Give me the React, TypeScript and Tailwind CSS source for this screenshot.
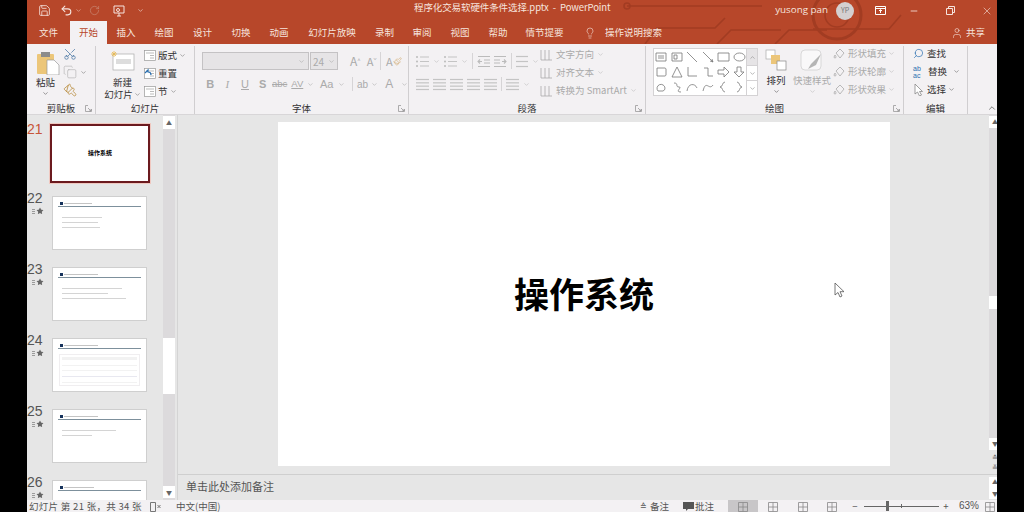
import type { ReactNode } from 'react';
import { ChevronDown, ChevronUp, Copy, Lightbulb, Minus, Paintbrush, Scissors, Search, Undo2, User, X, Save, RotateCw, Star } from 'lucide-react';

const FONT = "font-['Noto_Sans_CJK_SC','Liberation_Sans',sans-serif]";

const tabs = [
  { label: '文件', w: 'w-[43px]' },
  { label: '开始', w: 'w-[37px]', active: true },
  { label: '插入', w: 'w-[38px]' },
  { label: '绘图', w: 'w-[38px]' },
  { label: '设计', w: 'w-[39px]' },
  { label: '切换', w: 'w-[38px]' },
  { label: '动画', w: 'w-[38px]' },
  { label: '幻灯片放映', w: 'w-[68px]' },
  { label: '录制', w: 'w-[37px]' },
  { label: '审阅', w: 'w-[38px]' },
  { label: '视图', w: 'w-[38px]' },
  { label: '帮助', w: 'w-[38px]' },
  { label: '情节提要', w: 'w-[55px]' },
];

function Caret({ className = 'text-[#777]' }: { className?: string }) {
  return <ChevronDown size={7} strokeWidth={2} className={className} />;
}

function Group({ label, width, launcher, children }: { label: string; width: string; launcher?: boolean; children: ReactNode }) {
  return (
    <div className={`${width} shrink-0 h-full flex flex-col border-r border-[#d0ced0]`}>
      <div className="flex-1 flex min-h-0">{children}</div>
      <div className="h-[12px] relative flex items-center justify-center text-[9.5px] text-[#333]">
        {label}
        {launcher && (
          <svg viewBox="0 0 7 7" className="absolute right-[3px] top-[3px] w-[7px] h-[7px]" fill="none" stroke="#999" strokeWidth="0.8">
            <path d="M3 .5H.5v6h6V4M3 3l3 3M6 4v2H4" />
          </svg>
        )}
      </div>
    </div>
  );
}

function Lines({ rows = 3, w = 13, color = '#c4c4c4' }: { rows?: number; w?: number; color?: string }) {
  return (
    <svg width={w} height={13} viewBox={`0 0 ${w} 13`} stroke={color} strokeWidth="1.2">
      {Array.from({ length: rows }).map((_, i) => (
        <line key={i} x1="0" x2={w} y1={1.5 + i * (10 / (rows - 1))} y2={1.5 + i * (10 / (rows - 1))} />
      ))}
    </svg>
  );
}

function BulletList() {
  return (
    <svg width="13" height="13" viewBox="0 0 13 13" stroke="#c4c4c4" strokeWidth="1.2" fill="#bbb">
      <path d="M4 2h9M4 6.500h9M4 11h9" />
      <circle cx="1" cy="2" r="1" stroke="none" />
      <circle cx="1" cy="6.500" r="1" stroke="none" />
      <circle cx="1" cy="11" r="1" stroke="none" />
    </svg>
  );
}

function IndentIcon({ flip }: { flip?: boolean }) {
  return (
    <svg width="13" height="13" viewBox="0 0 13 13" stroke="#bbb" strokeWidth="1.1" fill="none" className={flip ? '-scale-x-100' : ''}>
      <path d="M1 1.500h12M7 5h6M7 8h6M1 11.500h12M5 6.500H1M3 4.500l-2 2 2 2" />
    </svg>
  );
}

function Clipboard() {
  return (
    <div className="flex pt-[5px] pl-[7px]">
      <div className="w-[28px] flex flex-col items-center">
        <svg width="24" height="24" viewBox="0 0 24 24">
          <rect x="1" y="3" width="17" height="20" fill="#ecc679" rx="1" />
          <rect x="5" y="1" width="9" height="5" fill="#8c8c8c" />
          <path d="M11 9h7l5 5v10H11z" fill="#fff" stroke="#9a9a9a" strokeWidth="0.7" />
        </svg>
        <span className="text-[9.5px] leading-[13px] mt-[1px] mr-[5px] text-[#333]">粘贴</span>
        <Caret className="text-[#555] mt-[1px] mr-[5px]" />
      </div>
      <div className="flex flex-col gap-[4px] ml-[1px] -mt-[4px]">
        <Scissors size={14} strokeWidth={1.2} className="text-[#3d6f9e] -rotate-90" />
        <div className="flex items-center gap-[3px]">
          <Copy size={14} strokeWidth={1} className="text-[#aaa]" />
          <Caret />
        </div>
        <Paintbrush size={14} strokeWidth={1.4} className="text-[#b98d3f] rotate-90" />
      </div>
    </div>
  );
}

function SlidesGroup() {
  return (
    <div className="flex pt-[5px] pl-[8px]">
      <div className="w-[37px] flex flex-col items-center">
        <svg width="25" height="20" viewBox="0 0 25 20">
          <rect x="3" y="3" width="21" height="16" fill="#fff" stroke="#aaa" strokeWidth="0.7" />
          <rect x="6" y="8" width="15" height="5" fill="#ddd" />
          <path d="M4 0v6M1 3h6M2 1l4 4M6 1L2 5" stroke="#e8b94f" strokeWidth="0.8" />
        </svg>
        <span className="text-[9.5px] leading-[12px] mt-[5px] text-[#333]">新建</span>
        <span className="flex items-center gap-[1px] text-[9.5px] leading-[12px] text-[#333] whitespace-nowrap">幻灯片<Caret /></span>
      </div>
      <div className="flex flex-col gap-[5px] -mt-[2px] text-[9.5px] text-[#333] ml-[3px] leading-[13px]">
        <div className="flex items-center gap-[2px]"><RibbonBox /><span>版式</span><Caret /></div>
        <div className="flex items-center gap-[2px]"><RibbonBox blue /><span>重置</span></div>
        <div className="flex items-center gap-[2px]"><RibbonBox /><span>节</span><Caret /></div>
      </div>
    </div>
  );
}

function RibbonBox({ blue }: { blue?: boolean }) {
  return (
    <svg width="12" height="11" viewBox="0 0 12 11" fill="none">
      <rect x=".5" y=".5" width="11" height="10" fill="#fff" stroke="#999" strokeWidth="0.7" />
      <path d="M2 3h8M6 5.500h4M6 8h4" stroke="#bbb" />
      {blue && <path d="M1 5l3-3v2c2 0 3 1 3 3" stroke="#2a6fb0" strokeWidth="1.2" />}
    </svg>
  );
}

function FontGroup() {
  const dim = 'text-[#aaa]';
  return (
    <div className="flex flex-col pt-[6px] pl-[7px] w-full">
      <div className="flex items-center h-[18px]">
        <div className="w-[107px] h-[18px] bg-[#e6e4e6] border border-[#c4c2c4] flex items-center justify-end pr-[3px]"><Caret className="text-[#aaa]" /></div>
        <div className="w-[28px] h-[18px] bg-[#e6e4e6] border border-[#c4c2c4] ml-[1px] flex items-center justify-between pl-[2px] pr-[2px] text-[10px] text-[#aaa]">24<Caret className="text-[#aaa]" /></div>
        <span className={`ml-[12px] text-[12px] ${dim}`}>A<sup className="text-[6px]">^</sup></span>
        <span className={`ml-[6px] text-[11px] ${dim}`}>A<sup className="text-[6px]">ˇ</sup></span>
        <div className="ml-[3px] w-[1px] h-[18px] bg-[#d6d4d6]" />
        <span className={`ml-[5px] text-[11px] ${dim}`}>A</span>
        <Paintbrush size={9} className="text-[#d8b98c]" />
      </div>
      <div className="flex items-center h-[14px] mt-[7px] text-[11px] text-[#aaa] font-['Liberation_Sans',sans-serif]">
        <b className="w-[17px] text-center">B</b>
        <i className="w-[18px] text-center font-['Liberation_Serif',serif]">I</i>
        <u className="w-[18px] text-center">U</u>
        <b className="w-[18px] text-center">S</b>
        <s className="w-[17px] text-center text-[9.5px]">abc</s>
        <span className="w-[19px] text-center text-[9.5px] underline">AV</span>
        <Caret className="text-[#aaa]" />
        <span className="w-[23px] text-center ml-[2px]">Aa</span>
        <Caret className="text-[#aaa]" />
        <div className="ml-[7px] w-[1px] h-[14px] bg-[#d6d4d6]" />
        <span className="ml-[1px] w-[18px] text-center text-[10px]">ab</span>
        <Caret className="text-[#aaa]" />
        <span className="ml-[7px] text-[12px]">A</span>
        <Caret className="text-[#aaa] ml-[8px]" />
      </div>
    </div>
  );
}

function ParagraphGroup() {
  return (
    <div className="flex pt-[6px] pl-[7px]">
      <div className="w-[125px] flex flex-col">
        <div className="flex items-center h-[18px] gap-[4px]">
          <BulletList /><Caret className="text-[#bbb]" />
          <BulletList /><Caret className="text-[#bbb]" />
          <div className="w-[1px] h-[16px] bg-[#d6d4d6]" />
          <IndentIcon />
          <IndentIcon flip />
          <div className="w-[1px] h-[16px] bg-[#d6d4d6]" />
          <Lines w={12} /><Caret className="text-[#bbb]" />
        </div>
        <div className="flex items-center h-[14px] mt-[7px] gap-[4px]">
          <Lines rows={4} /><Lines rows={4} /><Lines rows={4} /><Lines rows={4} /><Lines rows={4} />
          <div className="w-[1px] h-[14px] bg-[#d6d4d6]" />
          <Lines rows={4} /><Caret className="text-[#bbb]" />
        </div>
      </div>
      <div className="flex flex-col -mt-[4px] gap-[5px] text-[9.5px] leading-[13px] text-[#aaa] ml-[-1px] whitespace-nowrap">
        {['文字方向', '对齐文本', '转换为 SmartArt'].map(t => (
          <div key={t} className="flex items-center gap-[3px]">
            <svg width="13" height="12" viewBox="0 0 13 12" fill="none" stroke="#aaa" strokeWidth="0.8"><path d="M1 1v10M5 1v10M9 1v10M1 11h11" /></svg>
            <span>{t}</span>
            <Caret className="text-[#bbb]" />
          </div>
        ))}
      </div>
    </div>
  );
}

const shapes = [
  ['M1 2h10v8H1zM3 5h6M3 7h6', 'M1 2h10v8H1zM3 4h3v4H3z', 'M1 1l10 10', 'M1 1l10 10M11 11l-3-1M11 11l-1-3', 'M1 2h11v8H1z', 'M1 6a5.500 4 0 1 0 11 0a5.500 4 0 1 0-11 0'],
  ['M2 2h8a1.500 1.500 0 0 1 1 1v6a1.500 1.500 0 0 1-1 1H2z', 'M6 1l5 10H1z', 'M2 1v9h9', 'M2 2h4v8h5', 'M1 4h6V1l5 5-5 5V8H1z', 'M4 1h4v5h3l-5 5-5-5h3z'],
  ['M3 10a4 4 0 1 1 7-3 3 3 0 0 1-2 3z', 'M3 2c5 0 1 4 5 4s-5 5 2 5', 'M1 10c1-8 8-8 10-3', 'M1 10c3-12 6 0 10-6', 'M8 1C5 1 6 6 3 6c3 0 2 5 5 5', 'M4 1c3 0 2 5 5 5-3 0-2 5-5 5'],
];

function DrawingGroup() {
  return (
    <div className="flex pt-[2px] pl-[7px]">
      <div className="w-[105px] h-[48px] border border-[#d4d2d4] bg-white flex">
        <div className="flex-1 flex flex-col justify-around pl-[1px]">
          {shapes.map((row, i) => (
            <div key={i} className="flex gap-[2.5px]">
              {row.map((d, j) => (
                <svg key={j} width="13" height="12" viewBox="0 0 13 12" fill="none" stroke="#777" strokeWidth="0.8"><path d={d} /></svg>
              ))}
            </div>
          ))}
        </div>
        <div className="w-[11px] border-l border-[#d4d2d4] flex flex-col text-[#888]">
          <div className="h-[16px] bg-[#e6e4e6] flex items-center justify-center"><ChevronUp size={7} /></div>
          <div className="h-[16px] border-y border-[#d4d2d4] flex items-center justify-center"><ChevronDown size={7} /></div>
          <div className="h-[14px] flex items-center justify-center"><ChevronDown size={7} /></div>
        </div>
      </div>
      <div className="w-[36px] flex flex-col items-center pt-[1px]">
        <svg width="22" height="22" viewBox="0 0 22 22">
          <rect x="1" y="1" width="9" height="9" fill="#fff" stroke="#aaa" strokeWidth="0.7" />
          <rect x="6" y="6" width="9" height="9" fill="#ecc679" />
          <rect x="12" y="12" width="9" height="9" fill="#fff" stroke="#888" strokeWidth="0.7" />
        </svg>
        <span className="text-[9.5px] leading-[13px] text-[#333] mt-[3px]">排列</span>
        <Caret className="text-[#555] mt-[1px]" />
      </div>
      <div className="w-[36px] flex flex-col items-center pt-[1px]">
        <svg width="24" height="22" viewBox="0 0 24 22" fill="none">
          <rect x="1" y="1" width="20" height="20" rx="4" fill="#f9f8f9" stroke="#ccc" strokeWidth="0.7" />
          <path d="M8 20l3-5 10-10-5 11z" fill="#b5b5b5" />
        </svg>
        <span className="text-[9.5px] leading-[13px] text-[#aaa] mt-[3px] whitespace-nowrap">快速样式</span>
        <Caret className="text-[#bbb] mt-[1px]" />
      </div>
      <div className="flex flex-col gap-[5px] text-[9.5px] leading-[13px] text-[#aaa] ml-[3px] whitespace-nowrap -mt-[1px]">
        {['形状填充', '形状轮廓', '形状效果'].map(t => (
          <div key={t} className="flex items-center gap-[2px]">
            <svg width="13" height="12" viewBox="0 0 13 12" fill="none" stroke="#aaa" strokeWidth="0.8"><path d="M3 5l4-4 4 4-4 5zM1 9a1 1 0 0 0 2 0c0-1-1-2-1-2z" /></svg>
            <span>{t}</span>
            <Caret className="text-[#bbb]" />
          </div>
        ))}
      </div>
    </div>
  );
}

function EditGroup() {
  return (
    <div className="flex flex-col gap-[4.5px] pt-[1px] pl-[9px] text-[9.5px] leading-[13px] text-[#333] whitespace-nowrap">
      <div className="flex items-center gap-[3px]"><Search size={11} strokeWidth={1.5} className="text-[#2a6fb0] -scale-x-100" /><span>查找</span></div>
      <div className="flex items-center gap-[3px]">
        <span className="w-[12px] text-[7px] leading-[7px] text-[#2a6fb0] font-['Liberation_Sans',sans-serif]">ab<br />ac</span>
        <span>替换</span><Caret className="text-[#666] ml-[3px]" />
      </div>
      <div className="flex items-center gap-[3px]">
        <svg width="11" height="13" viewBox="0 0 11 13" fill="#fff" stroke="#888" strokeWidth="0.8"><path d="M2 1v10l2.500-2 2 4 2-1-2-3.500H9.500z" /></svg>
        <span>选择</span><Caret className="text-[#666] -ml-[1px]" />
      </div>
    </div>
  );
}

function Thumb({ n, title, lines, chart, cut }: { n: number; title: string; lines: number[]; chart?: boolean; cut?: boolean }) {
  return (
    <div className={`flex shrink-0 ${cut ? 'h-[22px]' : 'h-[71px]'}`}>
      <div className="w-[25px] shrink-0 -mt-[5px] text-[#555] text-[14px] leading-[14px] font-['Liberation_Sans',sans-serif]">
        {n}
        <div className="flex pl-[5px] mt-[2px] items-center gap-[1px] text-[#666]">
          <svg width="3" height="7" viewBox="0 0 3 7" stroke="#888" strokeWidth="0.8"><path d="M0 1.500h3M0 3.500h3M0 5.500h3" /></svg>
          <Star size={8} fill="#666" strokeWidth={0} />
        </div>
      </div>
      <div className="w-[95px] h-[54px] bg-white border border-[#cfcfcf] shrink-0 px-[5px] pt-[5px]">
        <div className="flex items-center gap-[1px] h-[3px]">
          <span className="w-[3px] h-[3px] ml-[2px] bg-[#16335c] shrink-0" />
          <span className="h-[1px] bg-[#c4c4c4]" style={{ width: title }} />
        </div>
        <div className="h-[1px] bg-[#7d909c] mt-[1px]" />
        {chart ? (
          <div className="mt-[5px] mx-[1px] h-[32px] border border-[#f0eef0] flex flex-col justify-around px-[2px]">
            <div className="h-[3px] bg-[#f2f2f2]" />
            <div className="h-[1px] bg-[#f2f2f2]" />
            <div className="h-[1px] bg-[#f2f2f2]" />
            <div className="h-[1px] bg-[#e8e8f0]" />
            <div className="h-[1px] bg-[#f2f2f2]" />
          </div>
        ) : (
          <div className="flex flex-col gap-[4px] mt-[10px] pl-[4px]">
            {lines.map((w, i) => <div key={i} className="h-[1px] bg-[#d4d4d4]" style={{ width: w }} />)}
          </div>
        )}
      </div>
    </div>
  );
}

function ViewIcon() {
  return (
    <svg width="10" height="10" viewBox="0 0 10 10" fill="none" stroke="#888" strokeWidth="0.8">
      <path d="M.5.5h9v9h-9zM.5 5h9M5 .5v9" />
    </svg>
  );
}

export default function App() {
  return (
    <div className={`w-[1024px] h-[512px] bg-black overflow-hidden ${FONT}`}>
      <div className="ml-[27px] w-[970px] h-[512px] flex flex-col relative bg-[#e6e6e6]">
        {/* title + tabs */}
        <div className="h-[44px] shrink-0 bg-[#b7472a] relative text-[#f6e4de]">
          <svg className="absolute inset-0 w-full h-full" viewBox="0 0 970 44" fill="none" stroke="#a23c22" strokeWidth="1.6">
            <path d="M600 6h135M748 44l14-14h38" />
            <circle cx="600" cy="6" r="3" />
            <circle cx="810" cy="15" r="24" strokeWidth="3" />
            <circle cx="810" cy="15" r="12" />
            <path d="M618 44l12-16h58l10-10M786 29h76l12-14M690 44l14-14h50" />
          </svg>
          <div className="relative h-[21px] flex items-center text-[9.5px]">
            <div className="flex items-center text-[#f6e4de]">
              <Save size={13} strokeWidth={1.5} className="ml-[11px]" />
              <Undo2 size={13} strokeWidth={2} className="ml-[9px]" />
              <Caret className="text-[#e8c4b8] ml-[2px]" />
              <RotateCw size={11} strokeWidth={1.5} className="ml-[7px] text-[#c98873]" />
              <svg width="12" height="12" viewBox="0 0 12 12" fill="none" stroke="currentColor" className="ml-[13px]"><path d="M1 1h10v7H1zM6 8v3M4 11h4" /><circle cx="5" cy="5" r="1.500" /></svg>
              <Caret className="text-[#f6e4de] ml-[12px]" />
            </div>
            <div className="absolute left-[387px] top-0 h-[15px] leading-[15px] whitespace-pre tracking-[-0.1px]">程序化交易软硬件条件选择.pptx  -  PowerPoint</div>
            <div className="ml-auto flex items-center">
              <span className="text-[9.8px] font-['Open_Sans',sans-serif]">yusong pan</span>
              <div className="ml-[8px] w-[18px] h-[18px] rounded-full bg-[#d4d0d0] text-[#777] text-[7px] flex items-center justify-center">YP</div>
              <svg width="11" height="9" viewBox="0 0 11 9" className="ml-[21px]" fill="none" stroke="#fff"><path d="M.5.5h10v8H.5zM.5 2.500h10M5.500 7V4M4 5l1.500-1.500L7 5" /></svg>
              <Minus size={10} className="ml-[23px]" />
              <svg width="9" height="9" viewBox="0 0 9 9" fill="none" stroke="currentColor" className="ml-[27px]"><path d="M2.500 2V.5h6v6H7M.5 2.500h6v6h-6z" /></svg>
              <X size={12} strokeWidth={1.2} className="ml-[26px] mr-[4px]" />
            </div>
          </div>
          <div className="relative h-[23px] flex items-center text-[9.5px]">
            {tabs.map(t => (
              <div
                key={t.label}
                className={`${t.w} h-[23px] flex items-center justify-center shrink-0 ${t.active ? 'bg-[#f3f1f3] text-[#b7472a]' : ''}`}
              >
                {t.label}
              </div>
            ))}
            <Lightbulb size={12} strokeWidth={1.2} className="ml-[12px]" />
            <span className="ml-[9px]">操作说明搜索</span>
            <div className="ml-auto flex items-center gap-[3px] pr-[12px]">
              <User size={12} strokeWidth={1.2} />
              <span>共享</span>
            </div>
          </div>
        </div>

        {/* ribbon */}
        <div className="h-[71px] shrink-0 bg-[#f3f1f3] flex border-b border-[#d8d6d8] pt-[2px] relative">
          <Group label="剪贴板" width="w-[69px]" launcher><Clipboard /></Group>
          <Group label="幻灯片" width="w-[99px]"><SlidesGroup /></Group>
          <Group label="字体" width="w-[214px]" launcher><FontGroup /></Group>
          <Group label="段落" width="w-[237px]" launcher><ParagraphGroup /></Group>
          <Group label="绘图" width="w-[258px]" launcher><DrawingGroup /></Group>
          <Group label="编辑" width="w-[64px]"><EditGroup /></Group>
          <ChevronUp size={10} className="absolute right-0 bottom-[1px] text-[#666]" />
        </div>

        {/* main */}
        <div className="flex-1 flex min-h-0">
          <div className="w-[151px] shrink-0 flex border-r border-[#d4d4d4] overflow-hidden">
            <div className="w-[136px] shrink-0 flex flex-col overflow-hidden">
              <div className="flex h-[81px] shrink-0 pt-[9px]">
                <div className="w-[23px] -mt-[2px] text-[#c8553a] text-[14px] leading-[14px] font-['Liberation_Sans',sans-serif]">21</div>
                <div className="w-[100px] h-[59px] pb-[3px] bg-white border-2 border-[#6b1a1f] flex items-center justify-center text-[6px] font-bold text-black shadow-[0_0_0_1px_#f0c8c0]">操作系统</div>
              </div>
              <Thumb n={22} title="28px" lines={[40, 36, 38]} />
              <Thumb n={23} title="34px" lines={[60, 46, 64]} />
              <Thumb n={24} title="34px" lines={[]} chart />
              <Thumb n={25} title="34px" lines={[54, 30]} />
              <Thumb n={26} title="30px" lines={[40]} cut />
            </div>
            <div className="w-[12px] shrink-0 bg-[#dcdadc] flex flex-col text-[#666]">
              <div className="h-[13px] mt-[1px] bg-white flex items-center justify-center text-[6px]">▲</div>
              <div className="h-[56px] mt-[209px] bg-white" />
              <div className="flex-1" />
              <div className="h-[12px] mb-[2px] bg-white flex items-center justify-center text-[6px]">▼</div>
            </div>
            <div className="w-[2px]" />
          </div>

          <div className="flex-1 flex flex-col min-w-0">
            <div className="flex-1 flex min-h-0">
              <div className="flex-1 pt-[7px] pl-[100px]">
                <div className="w-[612px] h-[344px] pb-[4px] bg-white flex items-center justify-center text-[35px] leading-none font-bold text-black">
                  操作系统
                </div>
              </div>
              <div className="w-[8px] shrink-0 bg-[#dcdadc] flex flex-col text-[#666]">
                <div className="h-[12px] mt-[1px] pl-[3px] bg-white overflow-hidden text-[6px] leading-[12px]">▲</div>
                <div className="h-[13px] mt-[168px] bg-white" />
                <div className="flex-1" />
                <div className="h-[12px] pl-[3px] bg-white text-[6px] leading-[12px] overflow-hidden">▼</div>
                <div className="h-[24px] pl-[3px] bg-[#e6e6e6] text-[7px] leading-[10px] pt-[2px] overflow-hidden">≛<br />≚</div>
              </div>
            </div>
            <div className="h-[26px] shrink-0 border-t border-[#cfcfcf] flex items-center pl-[8px] pb-[3px] text-[11px] text-[#555] relative">
              单击此处添加备注
              <div className="absolute right-0 top-[2px] w-[8px] pl-[3px] flex flex-col gap-[1px] text-[6px] text-[#666] bg-white">
                <div className="h-[10px] leading-[10px] overflow-hidden">▲</div>
                <div className="h-[11px] leading-[11px] overflow-hidden">▼</div>
              </div>
            </div>
          </div>
        </div>

        {/* status */}
        <div className="h-[12px] shrink-0 bg-[#f3f1f3] flex items-start text-[9.5px] leading-[12px] text-[#555]">
          <span className="ml-[2px] w-[121px] whitespace-nowrap tracking-[0.3px]">幻灯片 第 21 张，共 34 张</span>
          <svg width="12" height="10" viewBox="0 0 12 10" fill="none" stroke="#777" className="mt-[2px]"><path d="M.5.5h5v9h-5zM7.500 3l3 3M10.500 3l-3 3" /></svg>
          <span className="ml-[14px]">中文(中国)</span>
          <div className="ml-auto flex items-start pr-[2px]">
            <span className="flex items-center gap-[3px]"><span className="text-[8px]">≙</span>备注</span>
            <span className="ml-[14px] flex items-center gap-[1px]">
              <svg width="11" height="9" viewBox="0 0 11 9" fill="#555"><path d="M0 0h11v7H5L3 9V7H0z" /></svg>
              批注
            </span>
            <div className="ml-[14px] w-[30px] h-[12px] bg-[#c8c6c8] flex justify-center pt-[2px]"><ViewIcon /></div>
            <div className="w-[30px] flex justify-center pt-[2px]"><ViewIcon /></div>
            <div className="w-[29px] flex justify-center pt-[2px]"><ViewIcon /></div>
            <div className="w-[29px] flex justify-center pt-[2px]"><ViewIcon /></div>
            <span className="w-[18px] text-center">−</span>
            <div className="w-[75px] h-[12px] flex items-center relative">
              <div className="w-full h-[1px] bg-[#666]" />
              <div className="absolute left-[22px] top-[1px] w-[3px] h-[10px] bg-[#666]" />
              <div className="absolute left-[37px] top-[4px] w-[1px] h-[4px] bg-[#666]" />
            </div>
            <span className="w-[14px] text-center">+</span>
            <span className="ml-[6px] w-[26px] text-[10px] font-['Liberation_Sans',sans-serif]">63%</span>
            <div className="pt-[2px]"><ViewIcon /></div>
          </div>
        </div>

        {/* mouse pointer sitting on the slide */}
        <svg width="11" height="16" viewBox="0 0 11 16" className="absolute left-[807px] top-[282px]" fill="#fff" stroke="#555" strokeWidth="0.8">
          <path d="M1 1v12l3-2.500 2 4.500 2-1-2-4.300h4z" />
        </svg>
      </div>
    </div>
  );
}
